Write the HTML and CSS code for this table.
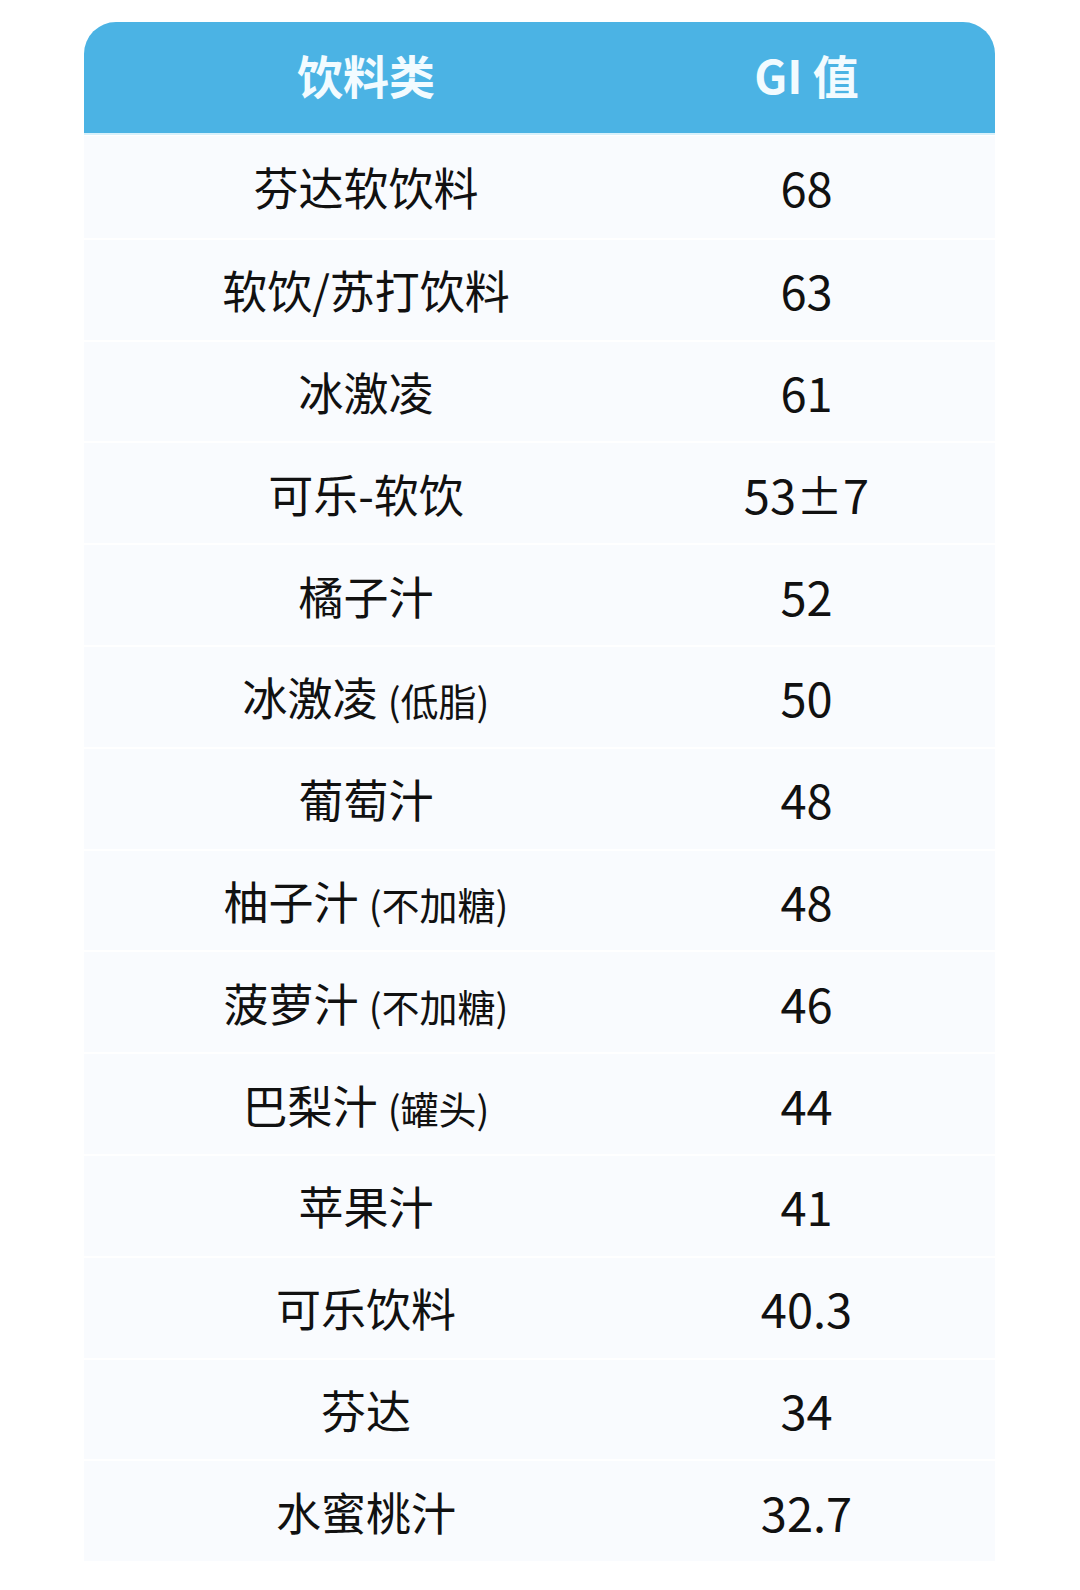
FILE: index.html
```html
<!DOCTYPE html>
<html lang="zh-CN">
<head>
<meta charset="utf-8">
<title>饮料类 GI 值</title>
<link rel="stylesheet" href="styles.css">
</head>
<body>
<div class="table">
  <div class="head">
    <div class="c1">饮料类</div>
    <div class="c2">GI 值</div>
  </div>
  <div class="rows">
    <div class="row"><div class="c1">芬达软饮料</div><div class="c2">68</div></div>
    <div class="row"><div class="c1">软饮/苏打饮料</div><div class="c2">63</div></div>
    <div class="row"><div class="c1">冰激凌</div><div class="c2">61</div></div>
    <div class="row"><div class="c1">可乐-软饮</div><div class="c2">53±7</div></div>
    <div class="row"><div class="c1">橘子汁</div><div class="c2">52</div></div>
    <div class="row"><div class="c1">冰激凌 <span class="sm">(低脂)</span></div><div class="c2">50</div></div>
    <div class="row"><div class="c1">葡萄汁</div><div class="c2">48</div></div>
    <div class="row"><div class="c1">柚子汁 <span class="sm">(不加糖)</span></div><div class="c2">48</div></div>
    <div class="row"><div class="c1">菠萝汁 <span class="sm">(不加糖)</span></div><div class="c2">46</div></div>
    <div class="row"><div class="c1">巴梨汁 <span class="sm">(罐头)</span></div><div class="c2">44</div></div>
    <div class="row"><div class="c1">苹果汁</div><div class="c2">41</div></div>
    <div class="row"><div class="c1">可乐饮料</div><div class="c2">40.3</div></div>
    <div class="row"><div class="c1">芬达</div><div class="c2">34</div></div>
    <div class="row"><div class="c1">水蜜桃汁</div><div class="c2">32.7</div></div>
  </div>
</div>
</body>
</html>
```

FILE: styles.css
```css
html, body {
  margin: 0;
  padding: 0;
  background: #ffffff;
}
body {
  font-family: "Noto Sans CJK SC", "Noto Sans", sans-serif;
  color: #111111;
}
.table {
  margin: 22px 0 0 84px;
  width: 911px;
}
.head {
  display: grid;
  grid-template-columns: 564px 1fr;
  height: 113px;
  box-sizing: border-box;
  padding-bottom: 8px;
  align-items: center;
  background: #4bb3e4;
  border-radius: 32px 32px 0 0;
  color: #f2fbff;
  font-size: 46px;
  font-weight: 700;
  border-bottom: 2px solid #d9f1fb;
}
.head .c1, .head .c2 {
  text-align: center;
  line-height: 1;
}
.head .c2 {
  padding-right: 30px;
}
.rows {
  padding-top: 1px;
}
.row {
  display: grid;
  grid-template-columns: 564px 1fr;
  height: 101.8px;
  align-items: center;
  background: #f9fbfe;
  border-top: 2px solid #ffffff;
  box-sizing: border-box;
  font-size: 45px;
  line-height: 1;
}
.row:first-child {
  border-top: none;
}
.row .c1, .row .c2 {
  text-align: center;
}
.row .c2 {
  padding-right: 30px;
  font-size: 47px;
}
.sm {
  font-size: 38px;
}
```
